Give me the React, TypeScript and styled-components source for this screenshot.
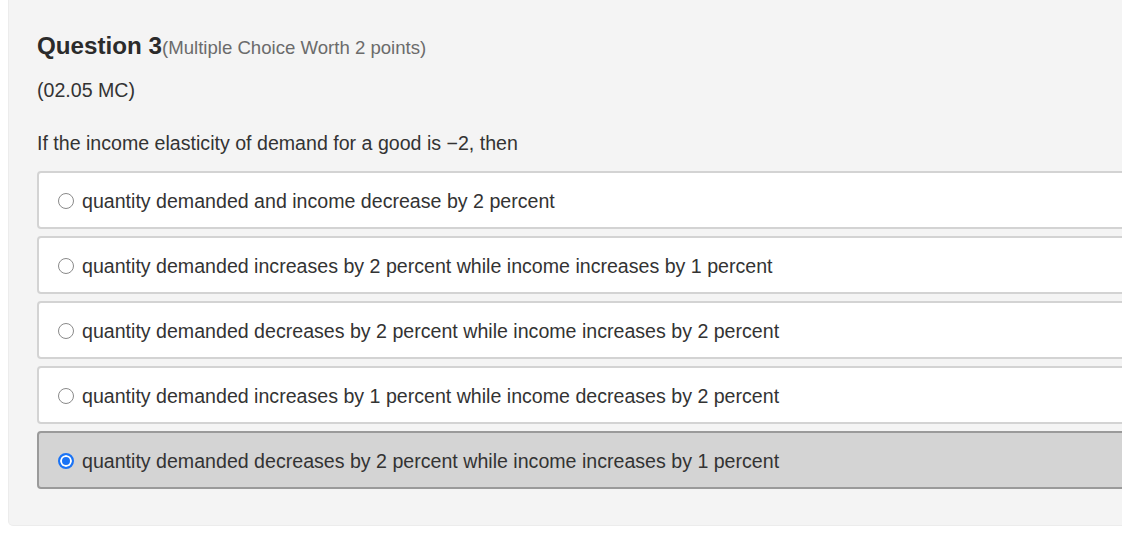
import styled, { createGlobalStyle } from "styled-components";

const GlobalStyle = createGlobalStyle`
    html, body {
        margin: 0;
        padding: 0;
        background: #ffffff;
        overflow: hidden;
    }
    body {
        font-family: "Liberation Sans", Arial, Helvetica, sans-serif;
    }
`;

const Page = styled.div`
    padding-left: 8px;
    width: 1122px;
    height: 542px;
    box-sizing: border-box;
`;

const Panel = styled.div`
    width: 1200px;
    box-sizing: border-box;
    background: #f4f4f4;
    border: 1px solid #ececec;
    border-top: none;
    border-radius: 0 0 5px 5px;
    padding: 32px 0 36px 28px;
    color: #333333;
`;

const Title = styled.h2`
    margin: 0;
    font-size: 24.2px;
    line-height: 28px;
    font-weight: 700;
    color: #2b2b2b;
`;

const Worth = styled.span`
    font-size: 18.6px;
    font-weight: 400;
    color: #6b6b6b;
`;

const Code = styled.div`
    margin-top: 16px;
    font-size: 19.6px;
    line-height: 24px;
`;

const Prompt = styled.p`
    margin: 29px 0 0;
    font-size: 19.6px;
    line-height: 24px;
`;

const Options = styled.div`
    margin-top: 16px;
    display: flex;
    flex-direction: column;
    gap: 7px;
`;

const Option = styled.label<{ $selected: boolean }>`
    display: flex;
    align-items: center;
    gap: 8px;
    height: 58px;
    box-sizing: border-box;
    padding: 3px 0 0 19px;
    border: 2px solid ${({ $selected }) => ($selected ? "#9a9a9a" : "#d3d3d3")};
    border-radius: 4px;
    background: ${({ $selected }) => ($selected ? "#d4d4d4" : "#ffffff")};
    font-size: 19.6px;
    color: #333333;
    cursor: pointer;
`;

const Radio = styled.span<{ $checked: boolean }>`
    flex: none;
    width: 16px;
    height: 16px;
    box-sizing: border-box;
    border-radius: 50%;
    border: ${({ $checked }) => ($checked ? "2px solid #1a73f5" : "1px solid #8a8a8a")};
    background: ${({ $checked }) => ($checked ? "#1a73f5" : "#ffffff")};
    box-shadow: ${({ $checked }) => ($checked ? "inset 0 0 0 2px #ffffff" : "none")};
    margin-top: -1px;
`;

const choices = [
    "quantity demanded and income decrease by 2 percent",
    "quantity demanded increases by 2 percent while income increases by 1 percent",
    "quantity demanded decreases by 2 percent while income increases by 2 percent",
    "quantity demanded increases by 1 percent while income decreases by 2 percent",
    "quantity demanded decreases by 2 percent while income increases by 1 percent",
];

export default function App() {
    const picked = 4;
    return (
        <>
            <GlobalStyle />
            <Page>
                <Panel>
                    <Title>
                        Question 3<Worth>(Multiple Choice Worth 2 points)</Worth>
                    </Title>
                    <Code>(02.05 MC)</Code>
                    <Prompt>If the income elasticity of demand for a good is −2, then</Prompt>
                    <Options>
                        {choices.map((text, i) => (
                            <Option key={i} $selected={i === picked}>
                                <Radio $checked={i === picked} />
                                {text}
                            </Option>
                        ))}
                    </Options>
                </Panel>
            </Page>
        </>
    );
}
